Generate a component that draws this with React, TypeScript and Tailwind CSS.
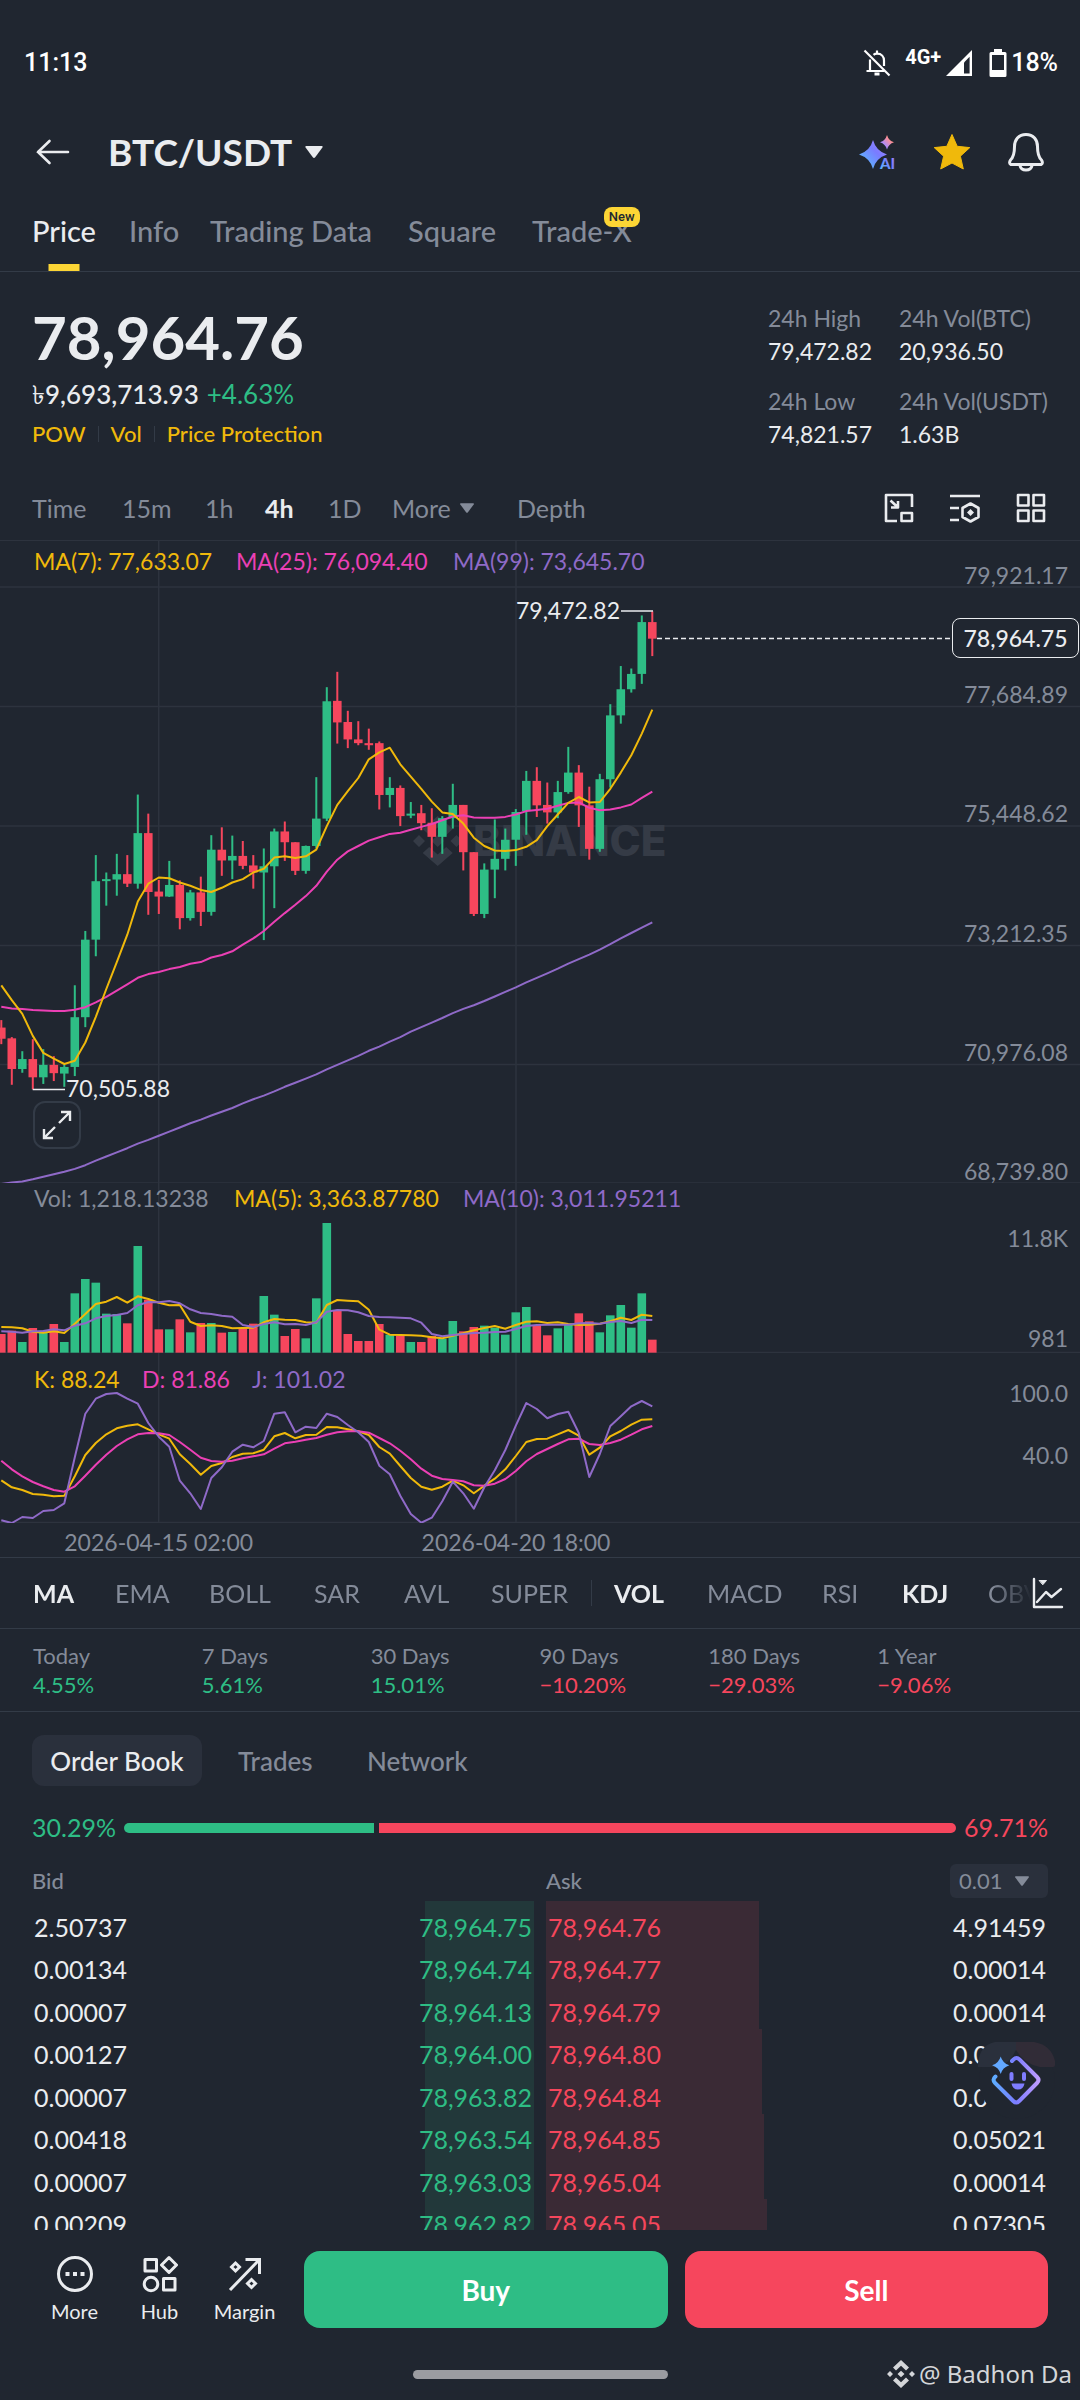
import { useState } from "react";

// Candles: [top wick, body top, body bottom, bottom wick], u = up, d = down
type Candle = [string, number, number, number, number];

const CANDLES: Candle[] = [
  ["d", 1158, 1176, 1203, 1216], ["d", 1199, 1202, 1276, 1314], ["u", 1233, 1252, 1276, 1285],
  ["d", 1204, 1252, 1296, 1325], ["u", 1228, 1266, 1296, 1312], ["d", 1245, 1266, 1286, 1305],
  ["u", 1266, 1271, 1287, 1319], ["u", 1074, 1151, 1271, 1293], ["u", 943, 964, 1151, 1175],
  ["u", 760, 823, 964, 1004], ["u", 802, 818, 822, 882], ["u", 757, 806, 819, 858],
  ["d", 760, 806, 829, 837], ["u", 614, 707, 829, 841], ["d", 660, 707, 849, 904],
  ["d", 820, 848, 860, 902], ["u", 774, 832, 860, 861], ["d", 821, 832, 912, 939],
  ["u", 844, 850, 912, 918], ["d", 812, 850, 897, 931], ["u", 712, 747, 897, 906],
  ["d", 693, 747, 773, 810], ["u", 713, 762, 773, 818], ["d", 726, 762, 786, 794],
  ["d", 760, 785, 802, 841], ["u", 744, 787, 802, 965], ["u", 696, 703, 787, 888],
  ["d", 679, 703, 729, 774], ["d", 729, 729, 798, 808], ["u", 737, 738, 798, 805],
  ["u", 572, 672, 738, 744], ["u", 355, 389, 672, 678], ["d", 318, 388, 440, 491],
  ["d", 412, 439, 481, 502], ["d", 437, 481, 490, 495], ["d", 455, 490, 495, 506],
  ["d", 486, 490, 615, 650], ["u", 572, 598, 615, 645], ["d", 592, 598, 666, 690],
  ["u", 632, 660, 664, 671], ["d", 639, 659, 683, 700], ["d", 647, 682, 716, 766],
  ["u", 666, 671, 716, 757], ["u", 588, 639, 671, 696], ["d", 639, 639, 753, 797],
  ["d", 753, 753, 902, 907], ["u", 780, 795, 902, 912], ["u", 674, 769, 795, 864],
  ["u", 696, 723, 769, 797], ["u", 649, 656, 723, 786], ["u", 557, 581, 654, 711],
  ["d", 548, 581, 640, 668], ["d", 585, 639, 657, 684], ["u", 581, 608, 657, 671],
  ["u", 499, 561, 608, 612], ["d", 543, 561, 640, 692], ["d", 595, 640, 745, 771],
  ["u", 564, 577, 745, 752], ["u", 396, 423, 577, 597], ["u", 304, 360, 423, 443],
  ["u", 310, 323, 360, 368], ["u", 182, 198, 323, 347], ["d", 172, 198, 238, 280],
];

const MA7 = [
  1074, 1110, 1143, 1196, 1237, 1251, 1264, 1256, 1212, 1150, 1083, 1018, 952, 872, 829, 814, 816, 826, 834, 844, 849,
  839, 826, 818, 802, 793, 766, 763, 767, 763, 747, 690, 639, 606, 574, 529, 512, 501, 541, 571, 600, 631, 657, 661,
  684, 718, 738, 749, 750, 748, 740, 724, 690, 662, 634, 620, 633, 632, 600, 561, 519, 467, 409,
];
const MA25 = [
  1126, 1130, 1131, 1134, 1135, 1136, 1136, 1133, 1127, 1115, 1102, 1087, 1072, 1056, 1047, 1042, 1035, 1030, 1022,
  1018, 1007, 1001, 992, 976, 961, 943, 921, 900, 880, 859, 834, 800, 771, 751, 738, 725, 717, 709, 706, 699, 692, 685,
  676, 667, 664, 669, 670, 670, 668, 662, 654, 651, 648, 641, 634, 633, 646, 652, 650, 645, 638, 622, 607,
];
const MA99 = [
  1553, 1550, 1547, 1542, 1536, 1530, 1524, 1517, 1508, 1497, 1487, 1477, 1467, 1456, 1447, 1437, 1427, 1417, 1407,
  1398, 1388, 1379, 1370, 1359, 1349, 1340, 1330, 1319, 1309, 1299, 1289, 1277, 1266, 1255, 1244, 1232, 1222, 1210,
  1199, 1186, 1175, 1164, 1153, 1141, 1131, 1122, 1112, 1101, 1090, 1079, 1067, 1056, 1045, 1034, 1022, 1011, 1000,
  988, 975, 961, 948, 935, 922,
];

const VOLUME = [
  465, 455, 489, 447, 455, 435, 489, 343, 300, 311, 404, 405, 433, 201, 362, 451, 451, 421, 460, 432, 432, 461, 459,
  448, 434, 351, 407, 471, 450, 478, 358, 132, 393, 465, 486, 486, 435, 467, 471, 489, 489, 471, 479, 426, 457, 444,
  440, 446, 467, 400, 384, 438, 469, 448, 437, 403, 427, 460, 409, 378, 446, 343, 482,
];
const VOL_MA5 = [
  444, 445, 448, 458, 461, 457, 462, 434, 405, 375, 368, 354, 371, 352, 360, 371, 379, 378, 428, 441, 439, 441, 448,
  447, 446, 430, 420, 422, 423, 430, 431, 378, 363, 365, 367, 392, 452, 467, 468, 469, 470, 475, 478, 470, 463, 454,
  447, 441, 449, 438, 428, 427, 432, 430, 435, 438, 437, 434, 427, 416, 423, 407, 411,
];
const VOL_MA10 = [
  457, 458, 461, 457, 456, 451, 454, 440, 433, 418, 411, 408, 402, 379, 369, 370, 366, 373, 391, 402, 405, 410, 413,
  438, 444, 435, 430, 436, 435, 438, 430, 398, 393, 394, 400, 411, 414, 415, 416, 418, 431, 465, 472, 468, 465, 462,
  461, 459, 458, 450, 441, 438, 437, 437, 437, 433, 432, 434, 429, 426, 432, 422, 423,
];

const K_LINE = [
  904, 925, 933, 945, 947, 952, 950, 892, 828, 792, 766, 748, 740, 736, 751, 766, 779, 826, 855, 887, 861, 852, 834,
  824, 823, 812, 772, 762, 778, 768, 767, 744, 745, 751, 757, 768, 804, 824, 861, 897, 923, 932, 923, 905, 919, 943,
  920, 899, 871, 831, 789, 780, 779, 766, 753, 770, 827, 806, 772, 756, 737, 722, 721,
];
const D_LINE = [
  845, 871, 892, 909, 922, 933, 938, 922, 890, 857, 827, 801, 781, 766, 762, 763, 768, 789, 812, 836, 846, 848, 845,
  838, 832, 826, 809, 793, 788, 782, 777, 767, 760, 757, 757, 761, 777, 793, 815, 841, 869, 890, 900, 903, 907, 919,
  920, 914, 900, 876, 847, 825, 810, 795, 781, 779, 795, 798, 792, 782, 767, 751, 741,
];
const J_LINE = [
  1024, 1032, 1014, 1017, 996, 993, 973, 835, 704, 659, 645, 642, 659, 674, 732, 773, 803, 905, 943, 990, 897, 865,
  818, 797, 805, 786, 704, 700, 760, 743, 747, 704, 714, 738, 760, 789, 860, 886, 950, 1005, 1031, 1016, 967, 908, 943,
  989, 925, 874, 813, 740, 672, 690, 718, 705, 698, 762, 894, 825, 741, 712, 682, 666, 682,
];

const GREEN = "#2ebd85";
const RED = "#f6465d";
const YELLOW = "#f0b90b";
const PINK = "#eb40b5";
const PURPLE = "#8f6ac8";
const GRID = "#2d333e";

const xAt = (i: number) => 1.3 + i * 10.5;
const priceY = (v: number) => v / 2.412 - 1;
const volY = (v: number) => v / 3 - 4;
const kdjY = (v: number) => v / 3 - 174;

function toPoints(values: number[], y: (v: number) => number) {
  return values.map((v, i) => `${xAt(i)},${y(v).toFixed(1)}`).join(" ");
}

function Line({ values, y, color }: { values: number[]; y: (v: number) => number; color: string }) {
  return <polyline points={toPoints(values, y)} fill="none" stroke={color} strokeWidth="2" strokeLinejoin="round" />;
}

function TimeGrid() {
  return (
    <g stroke={GRID} strokeWidth="1.5">
      <line x1="158.7" x2="158.7" y1="0" y2="100%" />
      <line x1="516" x2="516" y1="0" y2="100%" />
    </g>
  );
}

function Caret({ className }: { className: string }) {
  return (
    <svg viewBox="0 0 20 14" className={className} aria-hidden="true">
      <path d="M2.2 1h15.6q1.6 0 .6 1.6l-7.2 9.6q-1.2 1.4-2.4 0L1.6 2.6Q.6 1 2.2 1z" fill="currentColor" />
    </svg>
  );
}

function StatusBar() {
  return (
    <div className="flex h-[126px] shrink-0 items-center justify-between pr-[22px] pl-6 font-[Roboto,sans-serif] text-[25px] leading-8 font-medium text-white">
      <span>11:13</span>
      <div className="flex items-center">
        <svg viewBox="0 0 28 28" className="mr-3.5 size-7" fill="none" stroke="currentColor" strokeWidth="2.2">
          <path d="M7 21V10.5M10.5 5.8Q12 4.6 14 4.6c4.6 0 7 3.2 7 7V17M3.5 22h18M14 1.5v3" />
          <path d="M11.5 25h5" strokeWidth="3" />
          <path d="M1.5 1.5l25 25" />
        </svg>
        <span className="mr-1 mb-3 text-[20px] leading-6 font-bold">4G+</span>
        <svg viewBox="0 0 28 28" className="mr-4 size-7">
          <path d="M27 1v26H1z" fill="currentColor" />
          <path d="M19 13.5l5.6-5.8V24.5H19z" fill="#202630" />
        </svg>
        <svg viewBox="0 0 18 28" className="mr-1 h-7 w-[18px]">
          <path d="M5 0h8v3h3q1.5 0 1.500 1.500V26.500q0 1.500-1.500 1.500H2Q.5 28 .5 26.500V4.500Q.5 3 2 3h3z" fill="currentColor" />
          <path d="M3 6h12v15H3z" fill="#202630" />
        </svg>
        <span>18%</span>
      </div>
    </div>
  );
}

function Header() {
  return (
    <header className="flex h-[52px] shrink-0 items-center justify-between px-8">
      <div className="flex items-center">
        <button aria-label="Back" className="mr-9">
          <svg viewBox="0 0 40 28" className="h-7 w-10" fill="none" stroke="currentColor" strokeWidth="2.6" strokeLinecap="round">
            <path d="M36 14H6M17.500 3L6 14l11.500 11" />
          </svg>
        </button>
        <button className="flex items-center gap-3 text-[37px] leading-[52px] font-bold">
          BTC/USDT
          <Caret className="h-[14px] w-5" />
        </button>
      </div>
      <div className="flex items-center gap-9 pr-[3px]">
        <button aria-label="AI assistant">
          <svg viewBox="0 0 40 40" className="size-10">
            <defs>
              <linearGradient id="spark" x1="0" y1="1" x2="1" y2="0">
                <stop offset="0.2" stopColor="#5fb0ff" />
                <stop offset="0.6" stopColor="#7a7bff" />
                <stop offset="1" stopColor="#a78bff" />
              </linearGradient>
              <linearGradient id="sparkSmall" x1="0" y1="1" x2="1" y2="0">
                <stop offset="0.3" stopColor="#a98bff" />
                <stop offset="0.7" stopColor="#ff8f8f" />
              </linearGradient>
            </defs>
            <path d="M16 8q3 11 14 14.500Q19 26 16 37 13 26 2 22.500 13 19 16 8z" fill="url(#spark)" />
            <path d="M30 3q1.600 5.600 7 7.300-5.400 1.700-7 7.200-1.600-5.500-7-7.200 5.400-1.700 7-7.300z" fill="url(#sparkSmall)" />
            <text x="23" y="37" fontSize="15" fontWeight="900" fill="url(#spark)" stroke="#202630" strokeWidth="2" paintOrder="stroke">
              AI
            </text>
          </svg>
        </button>
        <button aria-label="Favorite" className="text-[#f0b90b]">
          <svg viewBox="0 0 38 38" className="size-[38px]">
            <path
              d="M19 1.500l5.200 11.800 12.600 1.300-9.400 8.600 2.900 12.800L19 30l-11.300 6 2.900-12.800-9.400-8.600 12.600-1.300z"
              fill="currentColor"
              stroke="currentColor"
              strokeLinejoin="round"
            />
          </svg>
        </button>
        <button aria-label="Alerts">
          <svg viewBox="0 0 38 40" className="h-10 w-[38px]" fill="none" stroke="currentColor" strokeWidth="3" strokeLinejoin="round">
            <path d="M19 2.500C11.500 2.500 7.500 8 7.500 14.500c0 7-.7 10.500-4 13.500Q1.500 31.500 4 32.500h30q2.500-1 .5-4.500c-3.300-3-4-6.500-4-13.500C30.500 8 26.500 2.500 19 2.500z" />
            <path d="M13 33.500c.5 3 3 4.500 6 4.500s5.500-1.500 6-4.500" />
          </svg>
        </button>
      </div>
    </header>
  );
}

function MainTabs() {
  const [tab, setTab] = useState("Price");
  return (
    <nav className="grid h-[94px] shrink-0 grid-cols-[97px_81px_198px_124px_auto] border-b border-[#333b47] pl-8 text-[29px] leading-9 font-medium">
      {["Price", "Info", "Trading Data", "Square", "Trade-X"].map((name) => (
        <button
          key={name}
          onClick={() => setTab(name)}
          className={`relative justify-self-start pt-3 whitespace-nowrap ${tab === name ? "text-[#eaecef]" : "text-[#848b99]"}`}
        >
          {name}
          {tab === name && <span className="absolute bottom-0 left-1/2 h-[7px] w-[31px] -translate-x-1/2 bg-[#fcd535]" />}
          {name === "Trade-X" && (
            <span className="absolute top-[29px] -right-2 rounded-lg bg-[#fcd535] px-[5px] font-[Roboto,sans-serif] text-[13px] leading-5 font-medium text-[#202630]">
              New
            </span>
          )}
        </button>
      ))}
    </nav>
  );
}

const STATS = [
  ["24h High", "79,472.82"],
  ["24h Vol(BTC)", "20,936.50"],
  ["24h Low", "74,821.57"],
  ["24h Vol(USDT)", "1.63B"],
];

function PriceSummary() {
  return (
    <section className="flex shrink-0 justify-between px-8 pt-8 pb-6">
      <div>
        <p className="text-[60px] leading-[66px] font-bold">78,964.76</p>
        <p className="mt-2 flex items-center gap-2 text-[26px] leading-8">
          <span className="font-medium">৳9,693,713.93</span>
          <span className="text-[#2ebd85]">+4.63%</span>
        </p>
        <div className="mt-2.5 flex items-center gap-3 text-[22px] leading-7 font-medium text-[#f0b90b]">
          <a href="#pow">POW</a>
          <span className="h-4 w-px bg-[#333b47]" />
          <a href="#vol">Vol</a>
          <span className="h-4 w-px bg-[#333b47]" />
          <a href="#protection">Price Protection</a>
        </div>
      </div>
      <dl className="-mt-0.5 grid grid-cols-[131px_149px] content-start gap-y-[17px] text-[23px] leading-[33px] whitespace-nowrap">
        {STATS.map(([label, value]) => (
          <div key={label}>
            <dt className="text-[#848b99]">{label}</dt>
            <dd>{value}</dd>
          </div>
        ))}
      </dl>
    </section>
  );
}

function TimeframeBar() {
  const [frame, setFrame] = useState("4h");
  return (
    <div className="flex h-[65px] shrink-0 items-center justify-between pr-[34px] pl-8">
      <div className="grid grid-cols-[90px_83px_60px_63px_64px_125px_auto] text-[25px] leading-8 text-[#848b99]">
        {["Time", "15m", "1h", "4h", "1D", "More", "Depth"].map((name) => (
          <button
            key={name}
            onClick={() => setFrame(name)}
            className={`flex items-center gap-2 justify-self-start ${frame === name ? "font-bold text-[#eaecef]" : ""}`}
          >
            {name}
            {name === "More" && <Caret className="h-3 w-4" />}
          </button>
        ))}
      </div>
      <div className="flex items-center gap-9">
        <button aria-label="Floating window">
          <svg viewBox="0 0 30 30" className="size-[30px]" fill="none" stroke="currentColor" strokeWidth="2.6" strokeLinejoin="round">
            <path d="M28 14V2H2v26h11M6.500 7.500l7 6.500M14 8v6.500H7" />
            <path d="M17.500 20H28v8H17.500z" />
          </svg>
        </button>
        <button aria-label="Chart settings">
          <svg viewBox="0 0 30 30" className="size-[30px]" fill="none" stroke="currentColor" strokeWidth="2.6" strokeLinejoin="round">
            <path d="M0 3h30M0 15h9M0 27h9M20.500 10.500l8 4.500v9l-8 4.500-8-4.500v-9z" />
            <path d="M20.500 16l3.500 3.500-3.500 3.500-3.500-3.500z" fill="currentColor" stroke="none" />
          </svg>
        </button>
        <button aria-label="Layout">
          <svg viewBox="0 0 30 30" className="size-[30px]" fill="none" stroke="currentColor" strokeWidth="2.6" strokeLinejoin="round">
            <path d="M2 2h10.500v10.500H2zM17.500 2H28v10.500H17.500zM2 17.500h10.500V28H2zM17.500 17.500H28V28H17.500z" />
          </svg>
        </button>
      </div>
    </div>
  );
}

const PRICE_TICKS = ["79,921.17", "77,684.89", "75,448.62", "73,212.35", "70,976.08", "68,739.80"];
const PRICE_LINES = [46, 165.5, 285, 404.5, 523.5, 642];

function PriceChart() {
  return (
    <section className="relative h-[643px] border-t border-[#2d333e] text-[23px]">
      <svg className="absolute inset-0 size-full">
        <g stroke={GRID} strokeWidth="1.5">
          {PRICE_LINES.map((y) => (
            <line key={y} x1="0" x2="100%" y1={y} y2={y} />
          ))}
        </g>
        <g fill="#353b46">
          <path d="M437.700 275l15 13-6.500 6-8.500-7.500-8.500 7.500-6.500-6zM422.700 312l6.500-6 8.500 7.500 8.500-7.500 6.500 6-15 13zM413 300l6-6 6 6-6 6zM450.500 300l6-6 6 6-6 6zM431.500 300l6.200-6 6.200 6-6.200 6z" />
          <text x="473" y="315" fontSize="42" fontWeight="800" fontFamily="Inter, sans-serif">
            BINANCE
          </text>
        </g>
        <TimeGrid />
        {CANDLES.map(([dir, high, top, bottom, low], i) => (
          <g key={i} fill={dir === "u" ? GREEN : RED}>
            <rect x={xAt(i) - 1} y={priceY(high)} width="2" height={priceY(low) - priceY(high)} />
            <rect x={xAt(i) - 4.3} y={priceY(top)} width="8.6" height={Math.max(2, priceY(bottom) - priceY(top))} />
          </g>
        ))}
        <Line values={MA99} y={priceY} color={PURPLE} />
        <Line values={MA25} y={priceY} color={PINK} />
        <Line values={MA7} y={priceY} color={YELLOW} />
        <g stroke="#eaecef" strokeWidth="1.5">
          <line x1="621" x2="653" y1="70" y2="70" />
          <line x1="32.700" x2="65" y1="548.500" y2="548.500" />
          <line x1="657" x2="100%" y1="97.500" y2="97.500" strokeDasharray="5 3" />
        </g>
        <g fill="#eaecef" fontSize="23">
          <text x="620" y="78" textAnchor="end">
            79,472.82
          </text>
          <text x="66" y="556">
            70,505.88
          </text>
        </g>
      </svg>
      <div className="absolute inset-y-0 right-3 grid grid-rows-[46px_repeat(5,1fr)] items-end text-right leading-6 text-[#848b99]">
        {PRICE_TICKS.map((tick) => (
          <span key={tick}>{tick}</span>
        ))}
      </div>
      <div className="relative grid grid-cols-[202px_217px_auto] pt-1 pl-[34px] leading-8 whitespace-nowrap">
        <span className="text-[#f0b90b]">MA(7): 77,633.07</span>
        <span className="text-[#eb40b5]">MA(25): 76,094.40</span>
        <span className="text-[#8f6ac8]">MA(99): 73,645.70</span>
      </div>
      <span className="absolute top-[77px] right-px flex h-10 w-[127px] items-center justify-center rounded-lg border border-[#eaecef] bg-[#202630] leading-8 font-medium">
        78,964.75
      </span>
      <button
        aria-label="Expand chart"
        className="absolute bottom-[34px] left-[33px] flex size-12 items-center justify-center rounded-xl border-2 border-[#333b47] bg-[#202630]"
      >
        <svg viewBox="0 0 30 30" className="size-[30px]" fill="none" stroke="currentColor" strokeWidth="2.4">
          <path d="M17 13L28 2M19 2h9v9M13 17L2 28M2 19v9h9" />
        </svg>
      </button>
    </section>
  );
}

function VolumeChart() {
  return (
    <section className="relative h-[170px] text-[23px]">
      <svg className="absolute inset-0 size-full">
        <TimeGrid />
        <line x1="0" x2="100%" y1="169.500" y2="169.500" stroke={GRID} strokeWidth="1.5" />
        {VOLUME.map((top, i) => (
          <rect
            key={i}
            x={xAt(i) - 4.3}
            y={volY(top)}
            width="8.6"
            height={volY(521) - volY(top)}
            fill={CANDLES[i][0] === "u" ? GREEN : RED}
          />
        ))}
        <Line values={VOL_MA5} y={volY} color={YELLOW} />
        <Line values={VOL_MA10} y={volY} color={PURPLE} />
      </svg>
      <div className="absolute inset-y-0 right-3 flex flex-col justify-between pt-10 text-right leading-[30px] text-[#848b99]">
        <span>11.8K</span>
        <span>981</span>
      </div>
      <div className="relative grid grid-cols-[200px_229px_auto] pl-[34px] leading-[30px] whitespace-nowrap">
        <span className="text-[#848b99]">Vol: 1,218.13238</span>
        <span className="text-[#f0b90b]">MA(5): 3,363.87780</span>
        <span className="text-[#8f6ac8]">MA(10): 3,011.95211</span>
      </div>
    </section>
  );
}

function KdjChart() {
  return (
    <section className="relative h-[170px] text-[23px]">
      <svg className="absolute inset-0 size-full">
        <TimeGrid />
        <line x1="0" x2="100%" y1="169.500" y2="169.500" stroke={GRID} strokeWidth="1.5" />
        <Line values={K_LINE} y={kdjY} color={YELLOW} />
        <Line values={D_LINE} y={kdjY} color={PINK} />
        <Line values={J_LINE} y={kdjY} color={PURPLE} />
      </svg>
      <div className="absolute top-6 right-3 flex flex-col gap-[30px] text-right leading-8 text-[#848b99]">
        <span>100.0</span>
        <span>40.0</span>
      </div>
      <div className="relative grid grid-cols-[108px_110px_auto] pt-2.5 pl-[34px] leading-8 whitespace-nowrap">
        <span className="text-[#f0b90b]">K: 88.24</span>
        <span className="text-[#eb40b5]">D: 81.86</span>
        <span className="text-[#8f6ac8]">J: 101.02</span>
      </div>
    </section>
  );
}

const INDICATORS = ["MA", "EMA", "BOLL", "SAR", "AVL", "SUPER", "VOL", "MACD", "RSI", "KDJ", "OBV"];

function IndicatorBar() {
  const [active, setActive] = useState(["MA", "VOL", "KDJ"]);
  const toggle = (name: string) =>
    setActive((list) => (list.includes(name) ? list.filter((item) => item !== name) : [...list, name]));
  return (
    <div className="flex h-[71px] items-center border-t border-[#333b47] pr-4">
      <div className="grid min-w-0 flex-1 grid-cols-[82px_94px_105px_90px_87px_123px_93px_115px_80px_86px_auto] overflow-hidden pl-[33px] text-[25px] leading-8 text-[#848b99] [mask-image:linear-gradient(to_right,black_calc(100%-40px),transparent)]">
        {INDICATORS.map((name) => (
          <button
            key={name}
            onClick={() => toggle(name)}
            className={`flex items-center text-left ${active.includes(name) ? "font-bold text-[#eaecef]" : ""}`}
          >
            {name}
            {name === "SUPER" && <span className="mr-[22px] ml-auto h-[26px] w-px bg-[#333b47]" />}
          </button>
        ))}
      </div>
      <button aria-label="Edit indicators">
        <svg viewBox="0 0 32 32" className="size-8" fill="none" stroke="currentColor" strokeWidth="2.4" strokeLinecap="round" strokeLinejoin="round">
          <path d="M2 2v28h28M5 25l9-10 5.500 5L29 12" />
          <path d="M7.500 3.500h7L11 7.500z" fill="currentColor" strokeWidth="1" />
        </svg>
      </button>
    </div>
  );
}

const PERFORMANCE = [
  ["Today", "4.55%"],
  ["7 Days", "5.61%"],
  ["30 Days", "15.01%"],
  ["90 Days", "−10.20%"],
  ["180 Days", "−29.03%"],
  ["1 Year", "−9.06%"],
];

function Performance() {
  return (
    <dl className="grid h-[83px] grid-cols-6 border-t border-[#333b47] pt-3 pr-[34px] pl-[33px] text-[22px] leading-[29px]">
      {PERFORMANCE.map(([label, value]) => (
        <div key={label}>
          <dt className="text-[#848b99]">{label}</dt>
          <dd className={value.startsWith("−") ? "text-[#f6465d]" : "text-[#2ebd85]"}>{value}</dd>
        </div>
      ))}
    </dl>
  );
}

const ORDERS = [
  { bidSize: "2.50737", bid: "78,964.75", ask: "78,964.76", askSize: "4.91459", askDepth: 84 },
  { bidSize: "0.00134", bid: "78,964.74", ask: "78,964.77", askSize: "0.00014", askDepth: 84 },
  { bidSize: "0.00007", bid: "78,964.13", ask: "78,964.79", askSize: "0.00014", askDepth: 84 },
  { bidSize: "0.00127", bid: "78,964.00", ask: "78,964.80", askSize: "0.00014", askDepth: 85 },
  { bidSize: "0.00007", bid: "78,963.82", ask: "78,964.84", askSize: "0.00014", askDepth: 85 },
  { bidSize: "0.00418", bid: "78,963.54", ask: "78,964.85", askSize: "0.05021", askDepth: 86 },
  { bidSize: "0.00007", bid: "78,963.03", ask: "78,965.04", askSize: "0.00014", askDepth: 86 },
  { bidSize: "0.00209", bid: "78,962.82", ask: "78,965.05", askSize: "0.07305", askDepth: 87 },
];

function OrderBook() {
  const [tab, setTab] = useState("Order Book");
  const buyShare = 30.29;
  return (
    <section className="border-t border-[#333b47] px-8 pt-[23px]">
      <div className="flex h-[51px] text-[26px] leading-8 font-medium">
        {["Order Book", "Trades", "Network"].map((name) => (
          <button
            key={name}
            onClick={() => setTab(name)}
            className={
              tab === name
                ? "mr-5 w-[170px] rounded-xl bg-[#2a303c] text-[#eaecef]"
                : "w-[129px] px-4 text-left text-[#848b99]"
            }
          >
            {name}
          </button>
        ))}
      </div>

      <div className="mt-[26px] flex h-8 items-center gap-2 text-[25px]">
        <span className="text-[#2ebd85]">{buyShare}%</span>
        <div className="flex h-2.5 flex-1 gap-[5px]">
          <div className="rounded-l-full bg-[#2ebd85]" style={{ flexGrow: buyShare }} />
          <div className="rounded-r-full bg-[#f6465d]" style={{ flexGrow: 100 - buyShare }} />
        </div>
        <span className="text-[#f6465d]">69.71%</span>
      </div>

      <table className="mt-5 w-full table-fixed text-[25px]">
        <thead>
          <tr className="h-[37px] text-left align-top text-[22px] leading-[34px] text-[#848b99]">
            <th colSpan={2} className="font-medium">
              Bid
            </th>
            <th className="pl-1.5 font-medium">Ask</th>
            <th className="font-normal">
              <div className="relative ml-auto w-[98px]">
                <select aria-label="Price step" className="block h-[34px] w-full appearance-none rounded-md bg-[#2a303c] pl-[9px]">
                  <option>0.01</option>
                  <option>0.1</option>
                </select>
                <Caret className="pointer-events-none absolute top-[11px] right-[18px] h-3 w-4" />
              </div>
            </th>
          </tr>
        </thead>
        <tbody>
          {ORDERS.map((row) => (
            <tr key={row.bid} className="leading-8 odd:h-[43px] even:h-[42px]">
              <td className="pt-2 pl-0.5">{row.bidSize}</td>
              <td className="relative pt-2 pr-2 text-right text-[#2ebd85]">
                <span className="absolute inset-y-0 right-1.5 w-[43%] bg-[#2ebd85]/12" />
                {row.bid}
              </td>
              <td className="relative pt-2 pl-2 text-[#f6465d]">
                <span className="absolute inset-y-0 left-1.5 bg-[#f6465d]/12" style={{ width: `${row.askDepth}%` }} />
                {row.ask}
              </td>
              <td className="pt-2 pr-0.5 text-right">{row.askSize}</td>
            </tr>
          ))}
        </tbody>
      </table>
    </section>
  );
}

function AssistantButton() {
  return (
    <button aria-label="Assistant" className="absolute right-6 bottom-[110px]">
      <svg viewBox="0 0 78 78" className="size-[78px]">
        <defs>
          <linearGradient id="face" x1="0" y1="0.5" x2="1" y2="0.5">
            <stop offset="0" stopColor="#5eacff" />
            <stop offset="0.5" stopColor="#7b7cff" />
            <stop offset="1" stopColor="#bf9cff" />
          </linearGradient>
        </defs>
        <circle cx="39" cy="39" r="38" fill="#202630" />
        <path d="M0 25V21Q2 3 17 0H38V8Q32 21 21 25z" fill="#2a303c" />
        <path d="M38 0H56Q73 3 77 19V23Q77 25 75 25H62Q46 22 38 8z" fill="#312c37" />
        <path
          d="M34 19l1.600-1.600q2.900-2.900 5.800 0L59 35q3 3 0 6L41.200 59q-3 3-6 0L17 41q-3-3.500.5-6.500"
          fill="none"
          stroke="url(#face)"
          strokeWidth="4"
          strokeLinecap="round"
        />
        <path d="M22.700 14.500q1.800 6.500 8.600 8.800-6.800 2.300-8.600 8.800-1.800-6.500-8.600-8.800 6.800-2.300 8.600-8.800z" fill="#62a8ff" />
        <g fill="#7f7dff">
          <rect x="31.500" y="30" width="4" height="9" rx="2" />
          <rect x="44" y="30" width="4" height="9" rx="2" />
          <path d="M33.500 41.500h13q-1 6-6.500 6t-6.500-6z" />
        </g>
      </svg>
    </button>
  );
}

function BottomBar() {
  return (
    <footer className="relative flex h-[170px] shrink-0 flex-col justify-between px-8 pt-[21px] pb-[21px]">
      <div className="flex h-[77px]">
        <div className="mr-[17px] grid w-[255px] grid-cols-3 text-[20px] leading-6">
          <button className="flex flex-col items-center gap-1.5 pt-1">
            <svg viewBox="0 0 38 38" className="size-[38px]" fill="none" stroke="currentColor" strokeWidth="3">
              <circle cx="19" cy="19" r="16.500" />
              <path d="M9.500 17h4v4h-4zM17 17h4v4h-4zM24.500 17h4v4h-4z" fill="currentColor" stroke="none" />
            </svg>
            More
          </button>
          <button className="flex flex-col items-center gap-1.5 pt-1">
            <svg viewBox="0 0 38 38" className="size-[38px]" fill="none" stroke="currentColor" strokeWidth="3" strokeLinejoin="round">
              <path d="M4 4.500h11.500V16H4zM22.500 23.500H34V35H22.500zM28 2.500l7.500 7.500-7.500 7.500-7.500-7.500z" />
              <circle cx="10" cy="29" r="6.800" />
            </svg>
            Hub
          </button>
          <button className="flex flex-col items-center gap-1.5 pt-1">
            <svg viewBox="0 0 38 38" className="size-[38px]" fill="none" stroke="currentColor" strokeWidth="3">
              <path d="M4 35L33 5M19.500 4.500H33.500V19" />
              <path d="M9.500 8l4 4-4 4-4-4zM25.500 24.500l4 4-4 4-4-4z" />
            </svg>
            Margin
          </button>
        </div>
        <div className="grid flex-1 grid-cols-2 gap-[17px] text-[28px] font-bold text-white">
          <button className="rounded-2xl bg-[#2ebd85]">Buy</button>
          <button className="rounded-2xl bg-[#f6465d]">Sell</button>
        </div>
      </div>
      <div className="mx-auto h-[9px] w-[255px] rounded-full bg-[#9b9ca1]" />
      <div className="absolute right-2 bottom-2 flex items-center gap-1 font-['Noto_Sans',sans-serif] text-[24px] leading-9 text-[#d4d6d9]">
        <svg viewBox="0 0 28 28" className="size-7" fill="currentColor">
          <path d="M14 0l8 7.500-3 3-5-4.800-5 4.800-3-3zM6 20.500l3-3 5 4.800 5-4.800 3 3L14 28zM0 14l3-3 3 3-3 3zM22 14l3-3 3 3-3 3zM10.500 14l3.500-3.300 3.500 3.300-3.500 3.300z" />
        </svg>
        @ Badhon Da
      </div>
    </footer>
  );
}

export default function App() {
  return (
    <div className="flex h-screen flex-col bg-[#202630] font-[Lato,sans-serif] text-[#eaecef]">
      <StatusBar />
      <Header />
      <MainTabs />
      <main className="relative flex min-h-0 flex-1 flex-col overflow-hidden">
        <PriceSummary />
        <TimeframeBar />
        <div className="shrink-0">
          <PriceChart />
          <VolumeChart />
          <KdjChart />
          <svg className="block h-[34px] w-full text-[23px]" fill="#848b99" textAnchor="middle">
            <text x="158.700" y="28">2026-04-15 02:00</text>
            <text x="516" y="28">2026-04-20 18:00</text>
          </svg>
          <IndicatorBar />
          <Performance />
        </div>
        <OrderBook />
        <AssistantButton />
      </main>
      <BottomBar />
    </div>
  );
}
